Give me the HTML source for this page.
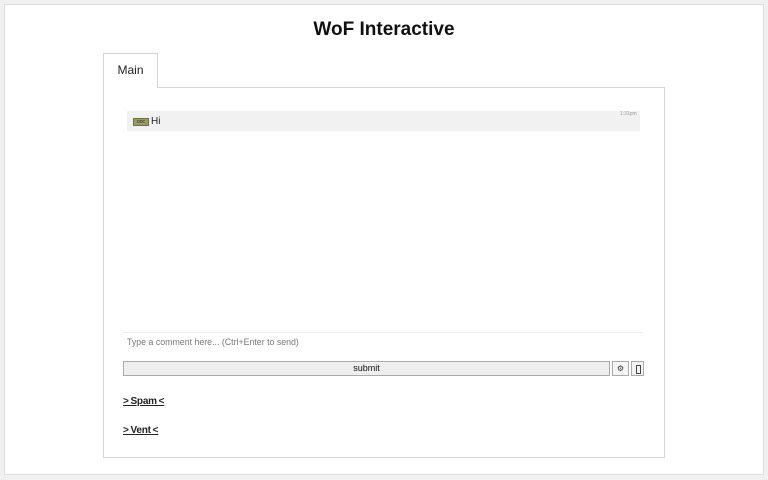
<!DOCTYPE html>
<html><head><meta charset="utf-8"><style>
*{margin:0;padding:0;box-sizing:border-box}
body{width:768px;height:480px;background:#f1f1f1;font-family:"Liberation Sans",sans-serif;position:relative;overflow:hidden}
.outer{position:absolute;left:4px;top:4px;width:760px;height:471px;background:#fff;border:1px solid #ddd}
h1{position:absolute;left:0;top:19px;width:768px;text-align:center;font-size:19px;font-weight:bold;color:#111}
.tab{position:absolute;left:103px;top:53px;width:55px;height:35px;border:1px solid #d4d4d4;border-bottom:none;background:#fff;font-size:12px;text-align:center;line-height:33px;color:#222;z-index:2}
.panel{position:absolute;left:103px;top:87px;width:562px;height:371px;border:1px solid #d4d4d4;background:#fff}
.msg{position:absolute;left:127px;top:111px;width:513px;height:20px;background:#f1f1f1}
.badge{position:absolute;left:133px;top:118px;width:16px;height:8px;background:#9a9a68;border:1px solid #6f6f45;font-size:5px;color:#333;line-height:6px;text-align:center}
.hi{position:absolute;left:151px;top:116px;font-size:10px;color:#222}
.time{position:absolute;left:620px;top:111px;font-size:5px;color:#999}
.line{position:absolute;left:123px;top:332px;width:520px;height:1px;background:#eee}
.ph{position:absolute;left:127px;top:337px;font-size:8.8px;letter-spacing:0;color:#777}
.sub{position:absolute;left:123px;top:361px;width:487px;height:15px;background:#eee;border:1px solid #aaa;font-size:9px;text-align:center;line-height:13px;color:#111}
.b1{position:absolute;left:612px;top:361px;width:17px;height:15px;border:1px solid #aaa;background:#f5f5f5;font-size:8px;text-align:center;line-height:13px;color:#333}
.b2{position:absolute;left:631px;top:361px;width:13px;height:15px;border:1px solid #aaa;background:#f5f5f5}
.b2:after{content:"";position:absolute;left:4px;top:3px;width:3px;height:7px;border:1px solid #444}
.lnk{position:absolute;left:123px;font-size:10px;font-weight:bold;color:#222;text-decoration:underline;letter-spacing:-0.2px}
</style></head><body>
<div class="outer"></div>
<h1>WoF Interactive</h1>
<div class="panel"></div>
<div class="tab">Main</div>
<div class="msg"></div>
<div class="badge">ᴅᴏᴄ</div>
<div class="hi">Hi</div>
<div class="time">1:31pm</div>
<div class="line"></div>
<div class="ph">Type a comment here... (Ctrl+Enter to send)</div>
<div class="sub">submit</div>
<div class="b1">⚙</div>
<div class="b2"></div>
<div class="lnk" style="top:396px">&gt;&#8201;Spam&#8201;&lt;</div>
<div class="lnk" style="top:425px">&gt;&#8201;Vent&#8201;&lt;</div>
</body></html>
